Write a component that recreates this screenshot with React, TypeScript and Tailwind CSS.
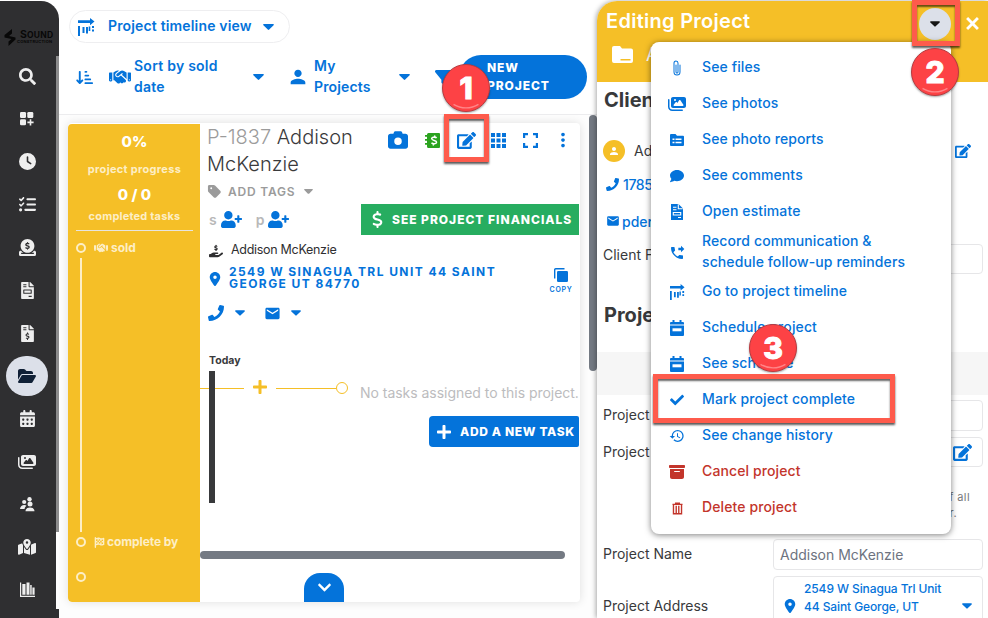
import type { ReactNode } from 'react';
import {
  FaClock, FaListCheck, FaCircleDollarToSlot, FaFolderOpen, FaCalendarDays, FaImages, FaMapLocationDot,
  FaArrowDownShortWide, FaHandshake, FaFilter, FaTag, FaLocationDot, FaCamera, FaComment, FaBoxArchive,
  FaDollarSign, FaHandHoldingDollar, FaFlagCheckered,
} from 'react-icons/fa6';
import {
  FaEdit, FaPhone, FaPlus, FaCheck, FaChevronDown, FaSearch, FaFileInvoice, FaFileInvoiceDollar, FaUserPlus,
} from 'react-icons/fa';
import { MdPerson, MdEmail, MdPhoneForwarded, MdHistory, MdMoreVert } from 'react-icons/md';
import { BsPaperclip } from 'react-icons/bs';
import clsx from 'clsx';

function Caret({ className = 'w-[11px] h-[6px]' }: { className?: string }) {
  return (
    <svg viewBox="0 0 11 6" className={clsx('shrink-0', className)} fill="currentColor">
      <path d="M1 0h9c.9 0 1.200.8.6 1.300L6.200 5.600c-.4.4-1 .4-1.400 0L.4 1.300C-.2.8.1 0 1 0z" />
    </svg>
  );
}

function TimelineIcon({ className }: { className?: string }) {
  return (
    <svg viewBox="0 0 17 18" className={className} fill="currentColor">
      <path d="M0 2.200h12V0l4.500 3.600L12 7.200V5H0z" />
      <path d="M0 8h2v10H0zM4.500 9h2v6h-2zM8 9h2v6.500H8zM10.700 8.500h1.600v4.500h-1.600zM14 8h2v2h-2zM14 11.500h2v2h-2z" />
    </svg>
  );
}

function AppsPlusIcon() {
  return (
    <svg viewBox="0 0 14 14" className="w-[14px] h-[14px]" fill="currentColor">
      <rect width="6" height="6" rx="1.300" />
      <rect x="7.300" width="6" height="6" rx="1.300" />
      <rect y="7.300" width="6" height="6" rx="1.300" />
      <path d="M9.700 7.300h1.600v2.300h2.300v1.600h-2.300v2.300H9.700v-2.300H7.400V9.600h2.300z" />
    </svg>
  );
}

function PeopleIcon() {
  return (
    <svg viewBox="0 0 15 15" className="w-[15px] h-[15px]" fill="currentColor">
      <circle cx="9.500" cy="2.300" r="2.200" />
      <circle cx="4.200" cy="5" r="2.100" />
      <circle cx="10" cy="7" r="2.500" />
      <path d="M0 12c.3-2.500 2-3.900 4.400-3.900 1 0 1.500.2 2.100.6C5.300 9.600 4.700 10.600 4.600 12zM5.500 14.200c.2-2.500 1.900-3.700 4.500-3.700s4.300 1.200 4.500 3.700z" />
    </svg>
  );
}

function BarsIcon() {
  return (
    <svg viewBox="0 0 15 15" className="w-[15px] h-[15px]" fill="currentColor">
      <path d="M0 .5h1.200v13.200H15V15H0zM2.300 2h3.200v10.800H2.300zM6.500 .5h3v12.300h-3zM10.200 3h1.500v9.800h-1.500zM12.400 5.500h2.200v7.300h-2.200z" />
    </svg>
  );
}

function ContactBookIcon() {
  return (
    <svg viewBox="0 0 15 15" className="w-[15px] h-[15px]" fill="none">
      <path d="M3.500 0H14a1 1 0 0 1 1 1v13a1 1 0 0 1-1 1H3.500a1.500 1.500 0 0 1-1.500-1.500v-12A1.500 1.500 0 0 1 3.500 0zM0 2h2v1.800H0zM0 6h2v1.800H0zM0 10h2v1.800H0z" fill="#2ba31f" />
      <path d="M11.600 5.200c-1-1.600-5-1.400-4.900.6.1 2 5 1.400 4.900 3.500-.1 1.900-3.900 2-5.100.4M9.900 2.500l-.6 1.800M8.700 10.800l-.6 1.800" stroke="#fff" strokeWidth="1.500" />
    </svg>
  );
}

function GridIcon() {
  return (
    <svg viewBox="0 0 15 15" className="w-[15px] h-[15px]" fill="currentColor">
      <path d="M0 0h4v4H0zM5.500 0h4v4h-4zM11 0h4v4h-4zM0 5.500h4v4H0zM5.500 5.500h4v4h-4zM11 5.500h4v4h-4zM0 11h4v4H0zM5.500 11h4v4h-4zM11 11h4v4h-4z" />
    </svg>
  );
}

function ExpandIcon() {
  return (
    <svg viewBox="0 0 15 15" className="w-[15px] h-[15px]" fill="none" stroke="currentColor" strokeWidth="2.200">
      <path d="M1.100 5V1.100H5M10 1.100h3.900V5M13.900 10v3.900H10M5 13.900H1.100V10" />
    </svg>
  );
}

function CopyIcon() {
  return (
    <svg viewBox="0 0 14 14" className="w-[14px] h-[14px]">
      <path d="M.7 10.500V1.700a1 1 0 0 1 1-1h8.800" stroke="currentColor" strokeWidth="1.400" fill="none" />
      <rect x="3" y="3" width="11" height="11" rx="1.300" fill="currentColor" />
    </svg>
  );
}

function FolderListIcon() {
  return (
    <svg viewBox="0 0 14 12" className="w-[14px] h-[12px]">
      <path d="M1 0h4.500L7 1.700h6a1 1 0 0 1 1 1V11a1 1 0 0 1-1 1H1a1 1 0 0 1-1-1V1a1 1 0 0 1 1-1z" fill="currentColor" />
      <path d="M2.500 4.500h2v1.500h-2zM5.500 4.500h6v1.500h-6zM2.500 7.800h2v1.500h-2zM5.500 7.800h6v1.500h-6z" fill="#fff" />
    </svg>
  );
}

function EstimateIcon() {
  return (
    <svg viewBox="0 0 12 16" className="w-[12px] h-[16px]">
      <path d="M0 0h7.500L12 4.500V16H0z" fill="currentColor" />
      <path d="M7.300.3v4.400h4.400M2 3.200h3.500M2 5.700h3.500M2.300 8.500h7.400v2.500H2.300zM7 13.500h3" stroke="#fff" strokeWidth="1.100" fill="none" />
    </svg>
  );
}

function CalendarIcon() {
  return (
    <svg viewBox="0 0 14 16" className="w-[14px] h-[16px]">
      <path d="M2.500 0h2v2h5V0h2v2H13a1 1 0 0 1 1 1v1.500H0V3a1 1 0 0 1 1-1h1.500zM0 5.600h14V15a1 1 0 0 1-1 1H1a1 1 0 0 1-1-1z" fill="currentColor" />
      <path d="M2.500 8.300h9v3h-9z" fill="#fff" />
    </svg>
  );
}

function TrashIcon() {
  return (
    <svg viewBox="0 0 12 13" className="w-[11px] h-[13px]" fill="none" stroke="currentColor">
      <path d="M.5 2h11M4 1.800V.7h4v1.100M1.600 2.500v9.700h8.800V2.500" strokeWidth="1.500" />
      <path d="M4.600 3.500V11.500M7.400 3.500V11.500" strokeWidth="1.500" />
    </svg>
  );
}

function StepBadge({ children, className }: { children: ReactNode; className: string }) {
  return (
    <div
      className={clsx(
        'absolute z-30 flex h-[48px] w-[48px] items-center justify-center rounded-full border border-[#b93a3f] bg-[#fd4245] text-[30px] font-extrabold text-white shadow-[0_1px_2px_rgba(0,0,0,0.35)]',
        className,
      )}
    >
      <svg viewBox="0 0 48 48" className="absolute inset-0" fill="none">
        <path d="M11 41c8 5 18 5 26 0" stroke="#ff8588" strokeWidth="1.500" />
      </svg>
      <span className="relative [-webkit-text-stroke:1px_white]">{children}</span>
    </div>
  );
}

function Highlight({ className }: { className: string }) {
  return (
    <div
      className={clsx(
        'absolute z-20 border-[5px] border-[#fe5b4c] shadow-[0_2px_2px_rgba(0,0,0,0.65),inset_0_2px_2px_rgba(0,0,0,0.6)]',
        className,
      )}
    />
  );
}

const navIcons = [
  <FaSearch size={17} />,
  <AppsPlusIcon />,
  <FaClock size={17} />,
  <FaListCheck size={17} />,
  <FaCircleDollarToSlot size={17} />,
  <FaFileInvoice size={17} />,
  <FaFileInvoiceDollar size={17} />,
  <FaFolderOpen size={18} />,
  <FaCalendarDays size={17} />,
  <FaImages size={18} />,
  <PeopleIcon />,
  <FaMapLocationDot size={18} />,
  <BarsIcon />,
];

function Sidebar() {
  return (
    <aside className="mt-px flex h-[617px] w-[59px] shrink-0 overflow-hidden rounded-tr-[18px] bg-[#2f2f31]">
      <div className="flex w-[56px] flex-col text-[#eee]">
        <div className="flex h-[54px] shrink-0 items-center pl-[4px] pt-[18px] text-[#080808]">
          <svg viewBox="0 0 12 17" className="h-[17px] w-[12px]" fill="currentColor">
            <path d="M8 0v4.500L5 7l6.500 1.500v2L4.500 17v-4.500L7.500 10 .5 8.500V6z" />
          </svg>
          <div className="w-[40px] pl-px">
            <div className="pl-[3px] text-[10.500px] font-bold leading-[8px] tracking-[0.2px]">
              S<span className="text-[8.500px]">OUND</span>
            </div>
            <div className="whitespace-nowrap text-[4px] font-bold leading-[5px] tracking-[0.2px]">CONSTRUCTION</div>
          </div>
        </div>
        {navIcons.map((icon, i) => (
          <div key={i} className="flex h-[42.800px] shrink-0 items-center justify-center pr-[2px]">
            {i === 7 ? (
              <div className="flex h-[40px] w-[42px] shrink-0 items-center justify-center rounded-full bg-[#dce0e9] text-[#102036]">{icon}</div>
            ) : (
              icon
            )}
          </div>
        ))}
      </div>
      <div className="w-[3px] pt-[55px]">
        <div className="h-[476px] bg-[#8c8c8d]" />
        <div className="h-[77px] bg-white" />
      </div>
    </aside>
  );
}

function Toolbar() {
  return (
    <header className="h-[115px] shrink-0 border-b border-[#ececee] pl-[10px] pt-[10px] text-[14px] font-semibold text-[#0473da]">
      <div className="flex h-[33px] w-[221px] items-center rounded-full border border-[#eeeef0] pl-[8px]">
        <TimelineIcon className="h-[18px] w-[17px]" />
        <span className="mb-[2px] ml-[13px] w-[144px] whitespace-nowrap tracking-[0.160px]">Project timeline view</span>
        <Caret className="ml-[11px] h-[6px] w-[11px]" />
      </div>
      <div className="mt-[12px] flex h-[44px] items-center leading-[21px]">
        <FaArrowDownShortWide size={17} className="ml-[7px] shrink-0" />
        <FaHandshake size={22} className="ml-[16px] shrink-0" />
        <span className="mb-[2px] ml-[3px] w-[93px] shrink-0 tracking-[0.250px]">Sort by sold<br />date</span>
        <Caret className="ml-[26px] h-[6px] w-[11px]" />
        <MdPerson size={22} className="ml-[23px] shrink-0" />
        <span className="mb-[2px] ml-[5px] w-[62px] shrink-0 tracking-[0.150px]">My Projects</span>
        <Caret className="ml-[23px] h-[6px] w-[11px]" />
        <FaFilter size={17} className="ml-[25px] shrink-0" />
        <button className="ml-[7px] flex h-[44px] w-[128px] shrink-0 items-center rounded-full bg-[#0473da] pl-[28px] text-left text-[12px] font-extrabold leading-[18px] tracking-[0.9px] text-white">
          NEW<br />PROJECT
        </button>
      </div>
    </header>
  );
}

function ProgressColumn() {
  return (
    <div className="flex w-[132px] shrink-0 flex-col rounded-l-[4px] bg-[#f5bf27] pl-[8px] pr-[7px] pt-[7px] font-bold text-[#fdeec5]">
      <div className="flex flex-col items-center border-b border-[#e6e4e0] pb-[5px]">
        <div className="h-[22px] text-[15px] font-extrabold leading-[22px] text-white">0%</div>
        <div className="mt-[5px] h-[22px] text-[11px] leading-[23px] tracking-[0.3px]">project progress</div>
        <div className="mt-[3px] h-[22px] text-[15px] font-extrabold leading-[24px] text-white">0 / 0</div>
        <div className="mt-[2px] h-[18px] text-[11px] leading-[19px] tracking-[0.2px]">completed tasks</div>
      </div>
      <div className="mt-[10px] flex h-[14px] items-center text-[12px]">
        <div className="h-[10px] w-[10px] rounded-full border-2 border-[#fdeec5]" />
        <FaHandshake size={14} className="ml-[8px]" />
        <span className="ml-[3px]">sold</span>
      </div>
      <div className="ml-[4px] mt-[3px] h-[274px] w-[2px] bg-[#fdeec5]" />
      <div className="mt-[3px] flex h-[14px] items-center text-[12px]">
        <div className="h-[10px] w-[10px] shrink-0 rounded-full border-2 border-[#fdeec5]" />
        <FaFlagCheckered size={11} className="ml-[8px] shrink-0" />
        <span className="ml-[2px] whitespace-nowrap tracking-[-0.1px]">complete by</span>
      </div>
      <div className="mt-[23px] h-[10px] w-[10px] rounded-full border-2 border-[#fdeec5]" />
    </div>
  );
}

function ProjectCard() {
  return (
    <div className="relative flex h-[479px] w-[512px] overflow-hidden rounded-[4px] bg-white pt-px shadow-[0_0_10px_rgba(0,0,0,0.12)]">
      <ProgressColumn />
      <div className="flex min-w-0 flex-1 flex-col pr-px text-[#3a3a3c]">
        <div className="flex h-[54px] shrink-0 pl-[7px]">
          <h1 className="w-[172px] shrink-0 text-[20px] font-light leading-[27px]">
            <span className="text-[#9b9b9b]">P-1837</span> Addison McKenzie
          </h1>
          <div className="ml-[9px] flex h-[32px] items-center text-[#0473da]">
            <FaCamera size={20} />
            <span className="ml-[17px]"><ContactBookIcon /></span>
            <FaEdit size={19} className="ml-[17px] mr-px" />
            <span className="ml-[14px]"><GridIcon /></span>
            <span className="ml-[17px]"><ExpandIcon /></span>
            <MdMoreVert size={22} className="ml-[14px] shrink-0" />
          </div>
        </div>
        <div className="flex h-[26px] shrink-0 items-center pl-[7px] pt-px text-[12px] font-semibold tracking-[0.8px] text-[#9b9b9b]">
          <FaTag size={15} />
          <span className="ml-[6px]">ADD TAGS</span>
          <Caret className="ml-[9px] h-[5px] w-[9px]" />
        </div>
        <div className="flex h-[31px] shrink-0 items-center pl-[9px] text-[14px] font-semibold text-[#b8b8b8]">
          s
          <FaUserPlus size={21} className="ml-[4px] text-[#0473da]" />
          <span className="ml-[14px]">p</span>
          <FaUserPlus size={21} className="ml-[4px] text-[#0473da]" />
          <button className="ml-auto flex h-[31px] w-[218px] items-center bg-[#27ad60] pl-[8px] text-[12px] font-extrabold tracking-[0.980px] text-white">
            <FaDollarSign size={17} />
            <span className="ml-[6px] whitespace-nowrap">SEE PROJECT FINANCIALS</span>
          </button>
        </div>
        <div className="flex h-[30px] shrink-0 items-center pl-[9px] pt-px text-[12.500px] tracking-[-0.3px] text-[#2f2f31]">
          <FaHandHoldingDollar size={14} />
          <span className="ml-[8px]">Addison McKenzie</span>
        </div>
        <div className="flex h-[28px] shrink-0 items-center pl-[8px] text-[#0473da]">
          <FaLocationDot size={14} />
          <span className="mb-[2px] ml-[7px] w-[290px] text-[12px] font-bold leading-[12px] tracking-[1.430px]">
            2549 W SINAGUA TRL UNIT 44 SAINT GEORGE UT 84770
          </span>
          <div className="ml-[25px] mt-[4px] flex w-[34px] flex-col items-center text-[7px] font-semibold tracking-[0.7px]">
            <CopyIcon />
            <span className="mt-[4px] leading-[8px]">COPY</span>
          </div>
        </div>
        <div className="flex h-[40px] shrink-0 items-center pl-[8px] text-[#0473da]">
          <FaPhone size={16} />
          <Caret className="ml-[11px] h-[6px] w-[10px]" />
          <MdEmail size={17} className="ml-[19px]" />
          <Caret className="ml-[10px] h-[6px] w-[10px]" />
        </div>
        <div className="mt-[14px] flex h-[27px] shrink-0 items-center pl-[9px] text-[10.500px] font-bold">Today</div>
        <div className="relative flex h-[42px] shrink-0 items-start pt-[3px] text-[#f5bf27]">
          <div className="absolute left-[9px] top-[-3px] h-[132px] w-[6px] bg-[#38393b]" />
          <div className="flex h-[21px] items-start">
            <div className="mt-[11px] w-[44px] border-t border-[#f5bf27]" />
            <FaPlus size={16} className="ml-[8px] mt-[2px]" />
            <div className="ml-[8px] mt-[11px] w-[60px] border-t border-[#f5bf27]" />
            <div className="mt-[5px] h-[12px] w-[12px] rounded-full border border-[#f5bf27]" />
          </div>
          <div className="ml-[12px] mt-[6px] whitespace-nowrap text-[14px] leading-[20px] tracking-[-0.030px] text-[#bcbcbe]">
            No tasks assigned to this project.
          </div>
        </div>
        <button className="ml-auto flex h-[31px] w-[150px] shrink-0 items-center rounded-l-[4px] rounded-r-[2px] bg-[#0473da] pl-[7px] text-[12px] font-extrabold tracking-[0.650px] text-white">
          <FaPlus size={16} />
          <span className="ml-[8px] whitespace-nowrap">ADD A NEW TASK</span>
        </button>
        <div className="mt-[104px] h-[8px] w-[365px] shrink-0 rounded-full bg-[#747a83]" />
        <button className="ml-[104px] mt-[14px] flex h-[29px] w-[40px] shrink-0 items-center justify-center rounded-t-[16px] bg-[#0473da] text-white">
          <FaChevronDown size={15} />
        </button>
      </div>
    </div>
  );
}

const menuItems: { icon: ReactNode; label: string; tall?: boolean; danger?: boolean }[] = [
  { icon: <BsPaperclip size={16} />, label: 'See files' },
  { icon: <FaImages size={18} />, label: 'See photos' },
  { icon: <FolderListIcon />, label: 'See photo reports' },
  { icon: <FaComment size={14} />, label: 'See comments' },
  { icon: <EstimateIcon />, label: 'Open estimate' },
  { icon: <MdPhoneForwarded size={16} />, label: 'Record communication & schedule follow-up reminders', tall: true },
  { icon: <TimelineIcon className="h-[16px] w-[15px]" />, label: 'Go to project timeline' },
  { icon: <CalendarIcon />, label: 'Schedule project' },
  { icon: <CalendarIcon />, label: 'See schedule' },
  { icon: <FaCheck size={14} />, label: 'Mark project complete' },
  { icon: <MdHistory size={16} />, label: 'See change history' },
  { icon: <FaBoxArchive size={16} />, label: 'Cancel project', danger: true },
  { icon: <TrashIcon />, label: 'Delete project', danger: true },
];

function ActionsMenu() {
  return (
    <div className="absolute left-[54px] top-[41px] z-10 flex h-[492px] w-[300px] flex-col rounded-[8px] bg-white pt-[6px] shadow-[0_1px_6px_rgba(0,0,0,0.5)]">
      {menuItems.map((item) => (
        <div
          key={item.label}
          className={clsx(
            'flex shrink-0 items-center text-[14px] font-medium leading-[21px] tracking-[0.110px]',
            item.tall ? 'h-[44px] pt-px' : 'h-[36px]',
            item.danger ? 'text-[#c3352b]' : 'text-[#0473da]',
          )}
        >
          <span className="ml-[16px] mt-[4px] flex w-[20px] shrink-0 justify-center">{item.icon}</span>
          <span className="ml-[15px] w-[225px]">{item.label}</span>
        </div>
      ))}
    </div>
  );
}

function Field({ label, className, children }: { label: string; className: string; children?: ReactNode }) {
  return (
    <div className={clsx('flex shrink-0 items-center pl-[6px] text-[14px]', className)}>
      <span className="mb-[2px] w-[170px] shrink-0 whitespace-nowrap">{label}</span>
      {children}
    </div>
  );
}

function EditPanel() {
  return (
    <section className="relative mt-px flex h-[617px] w-[391px] shrink-0 flex-col rounded-tl-[20px] bg-white text-[#38393b] shadow-[-1px_0_5px_rgba(0,0,0,0.35)]">
      <header className="h-[81px] shrink-0 rounded-tl-[20px] bg-[#f5bf27] text-white">
        <div className="flex h-[41px] items-center pl-[9px] text-[20px] font-semibold">
          <span className="mb-[2px] w-[313px] tracking-[0.280px]">Editing Project</span>
          <div className="mt-[5px] flex h-[32px] w-[32px] items-center justify-center rounded-full bg-[#dce0e9] text-[#151515]">
            <Caret className="h-[6px] w-[10px]" />
          </div>
          <svg viewBox="0 0 12 12" className="ml-[15px] mt-[3px] h-[13px] w-[13px]" stroke="currentColor" strokeWidth="2.600">
            <path d="M1 1l10 10M11 1L1 11" />
          </svg>
        </div>
        <div className="flex h-[25px] items-center pl-[15px] text-[18px]">
          <svg viewBox="0 0 21 17" className="h-[17px] w-[21px]">
            <path d="M2 0h6l2 2.500h9a2 2 0 0 1 2 2V15a2 2 0 0 1-2 2H2a2 2 0 0 1-2-2V2a2 2 0 0 1 2-2z" fill="#fff" />
            <path d="M8.500 13h10v1.500h-10z" fill="#f5bf27" />
          </svg>
          <span className="ml-[13px]">Addison</span>
        </div>
      </header>
      <h2 className="h-[37px] shrink-0 pl-[7px] text-[20px] font-bold leading-[37px]">Client</h2>
      <div className="mt-[15px] flex h-[34px] shrink-0 items-center pl-[6px] text-[14px]">
        <div className="flex h-[22px] w-[22px] items-center justify-center rounded-full bg-[#f5bf27] text-white">
          <MdPerson size={12} />
        </div>
        <span className="mb-[2px] ml-[9px] w-[321px]">Addison McKenzie</span>
        <FaEdit size={16} className="text-[#0473da]" />
      </div>
      <div className="flex h-[32px] shrink-0 items-center pl-[9px] text-[14px] font-medium text-[#0473da]">
        <FaPhone size={13} />
        <span className="ml-[4px] tracking-[-0.4px]">1785</span>
      </div>
      <div className="mt-[4px] flex h-[34px] shrink-0 items-center pl-[9px] text-[14px] font-medium text-[#0473da]">
        <MdEmail size={14} />
        <span className="ml-[2px]">pder</span>
      </div>
      <div className="mt-[6px] flex h-[30px] shrink-0 pl-[6px] text-[14px]">
        <span className="w-[170px] shrink-0 leading-[22px]">Client Facing</span>
        <div className="h-[30px] w-[210px] rounded-[4px] border border-[#e6e6e8]" />
      </div>
      <h2 className="mt-[24px] h-[36px] shrink-0 pl-[7px] text-[20px] font-bold leading-[34px]">Project</h2>
      <div className="mt-[18px] h-[43px] shrink-0 bg-[#f6f6f6]" />
      <Field label="Project Type" className="mt-[5px] h-[31px]">
        <div className="h-[31px] w-[210px] rounded-[4px] border border-[#e6e6e8]" />
      </Field>
      <Field label="Project Status" className="mt-[6px] h-[30px]">
        <div className="flex h-[30px] w-[210px] items-center justify-end rounded-[4px] border border-[#e6e6e8] pr-[10px] text-[#0473da]">
          <FaEdit size={19} />
        </div>
      </Field>
      <div className="mt-[22px] flex h-[36px] w-[380px] shrink-0 flex-col pr-[7px] text-right text-[11px] leading-[16px] tracking-[0.4px] text-[#77787b]">
        <span>of all</span>
        <span className="pr-[13px]">r.</span>
      </div>
      <Field label="Project Name" className="mt-[14px] h-[31px]">
        <div className="flex h-[31px] w-[210px] items-center rounded-[4px] border border-[#e6e6e8] pb-px pl-[6px] text-[#6d7380]">Addison McKenzie</div>
      </Field>
      <Field label="Project Address" className="mt-[6px] h-[60px]">
        <div className="flex h-[60px] w-[210px] items-center rounded-[4px] border border-[#e6e6e8] pl-[9px] text-[12px] font-medium leading-[18px] text-[#0473da]">
          <FaLocationDot size={14} className="shrink-0" />
          <span className="mb-[16px] ml-[7px] w-[145px] whitespace-nowrap tracking-[-0.1px]">
            2549 W Sinagua Trl Unit<br />44 Saint George, UT
          </span>
          <Caret className="ml-[13px] h-[6px] w-[10px]" />
        </div>
      </Field>
      <ActionsMenu />
    </section>
  );
}

export default function App() {
  return (
    <div className="relative flex h-[618px] w-[988px] overflow-hidden bg-white font-[Inter,'Liberation_Sans',sans-serif]">
      <Sidebar />
      <main className="flex w-[538px] shrink-0 flex-col">
        <Toolbar />
        <div className="flex h-[503px] bg-[#fdfdfd]">
          <div className="pl-[9px] pt-[8px]">
            <ProjectCard />
          </div>
          <div className="ml-[9px] h-[256px] w-[8px] rounded-full bg-[#747a83]" />
        </div>
      </main>
      <EditPanel />

      {/* Walkthrough steps */}
      <Highlight className="left-[444px] top-[114px] h-[48px] w-[45px]" />
      <Highlight className="left-[912px] top-0 h-[46px] w-[48px]" />
      <Highlight className="left-[653px] top-[374px] h-[49px] w-[242px]" />
      <StepBadge className="left-[442px] top-[64px]">1</StepBadge>
      <StepBadge className="left-[911px] top-[48px]">2</StepBadge>
      <StepBadge className="left-[749px] top-[324px]">3</StepBadge>
    </div>
  );
}
